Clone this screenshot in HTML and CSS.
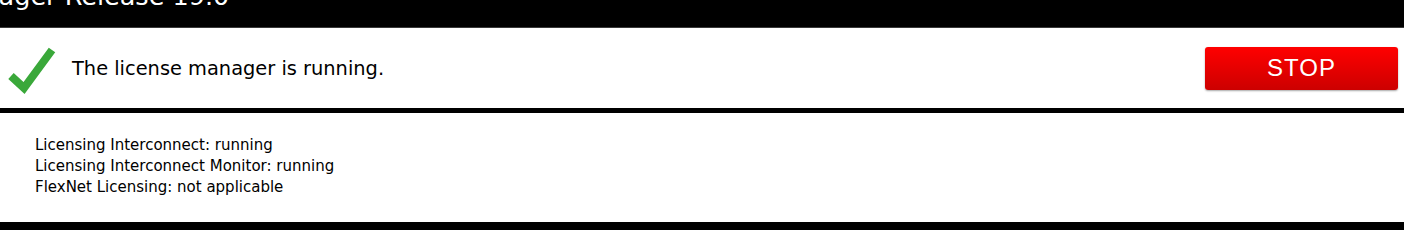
FILE: index.html
```html
<!DOCTYPE html>
<html>
<head>
  <meta charset="UTF-8">
  <title>ANSYS License Manager</title>
  <link rel="stylesheet" href="styles.css">
</head>
<body>
  <div class="page-header">
    <h1>ANSYS License Manager Release 19.0</h1>
  </div>

  <div class="status-row">
    <svg class="status-icon" width="50" height="50" viewBox="0 0 50 50">
      <polyline points="3,31 16,43 44,5" fill="none" stroke="#3aa83a" stroke-width="8" stroke-linejoin="miter"/>
    </svg>
    <span class="status-text">The license manager is running.</span>
    <button class="stop-btn">STOP</button>
  </div>

  <div class="service-list">
    <div>Licensing Interconnect: running</div>
    <div>Licensing Interconnect Monitor: running</div>
    <div>FlexNet Licensing: not applicable</div>
  </div>
</body>
</html>
```

FILE: styles.css
```css
body {
  margin: 0;
  font-family: "DejaVu Sans", sans-serif;
  background: #fff;
  color: #000;
  overflow: hidden;
}

.page-header {
  height: 27px;
  background: #000;
  border-bottom: 1px solid #3a3a3a;
  overflow: hidden;
}

.page-header h1 {
  margin: -22px 0 0 -252px;
  font-size: 25.5px;
  font-weight: normal;
  line-height: 36px;
  color: #fff;
  white-space: nowrap;
}

.status-row {
  height: 80px;
  display: flex;
  align-items: center;
  padding: 0 6px 0 8px;
  border-bottom: 5px solid #000;
}

.status-icon {
  flex: none;
  margin-top: 4px;
}

.status-text {
  flex: 1;
  margin-left: 14px;
  font-size: 19.4px;
}

.stop-btn {
  width: 193px;
  height: 43px;
  border: none;
  border-radius: 3px;
  background: linear-gradient(#ff0000, #cc0000);
  box-shadow: 0 1px 2px rgba(0, 0, 0, 0.35);
  color: #fff;
  font-family: "Liberation Sans", Arial, sans-serif;
  font-size: 24px;
  letter-spacing: 1px;
  cursor: pointer;
}

.service-list {
  height: 117px;
  box-sizing: border-box;
  padding: 22px 0 0 35px;
  font-size: 15px;
  line-height: 21px;
  border-bottom: 8px solid #000;
}
```
